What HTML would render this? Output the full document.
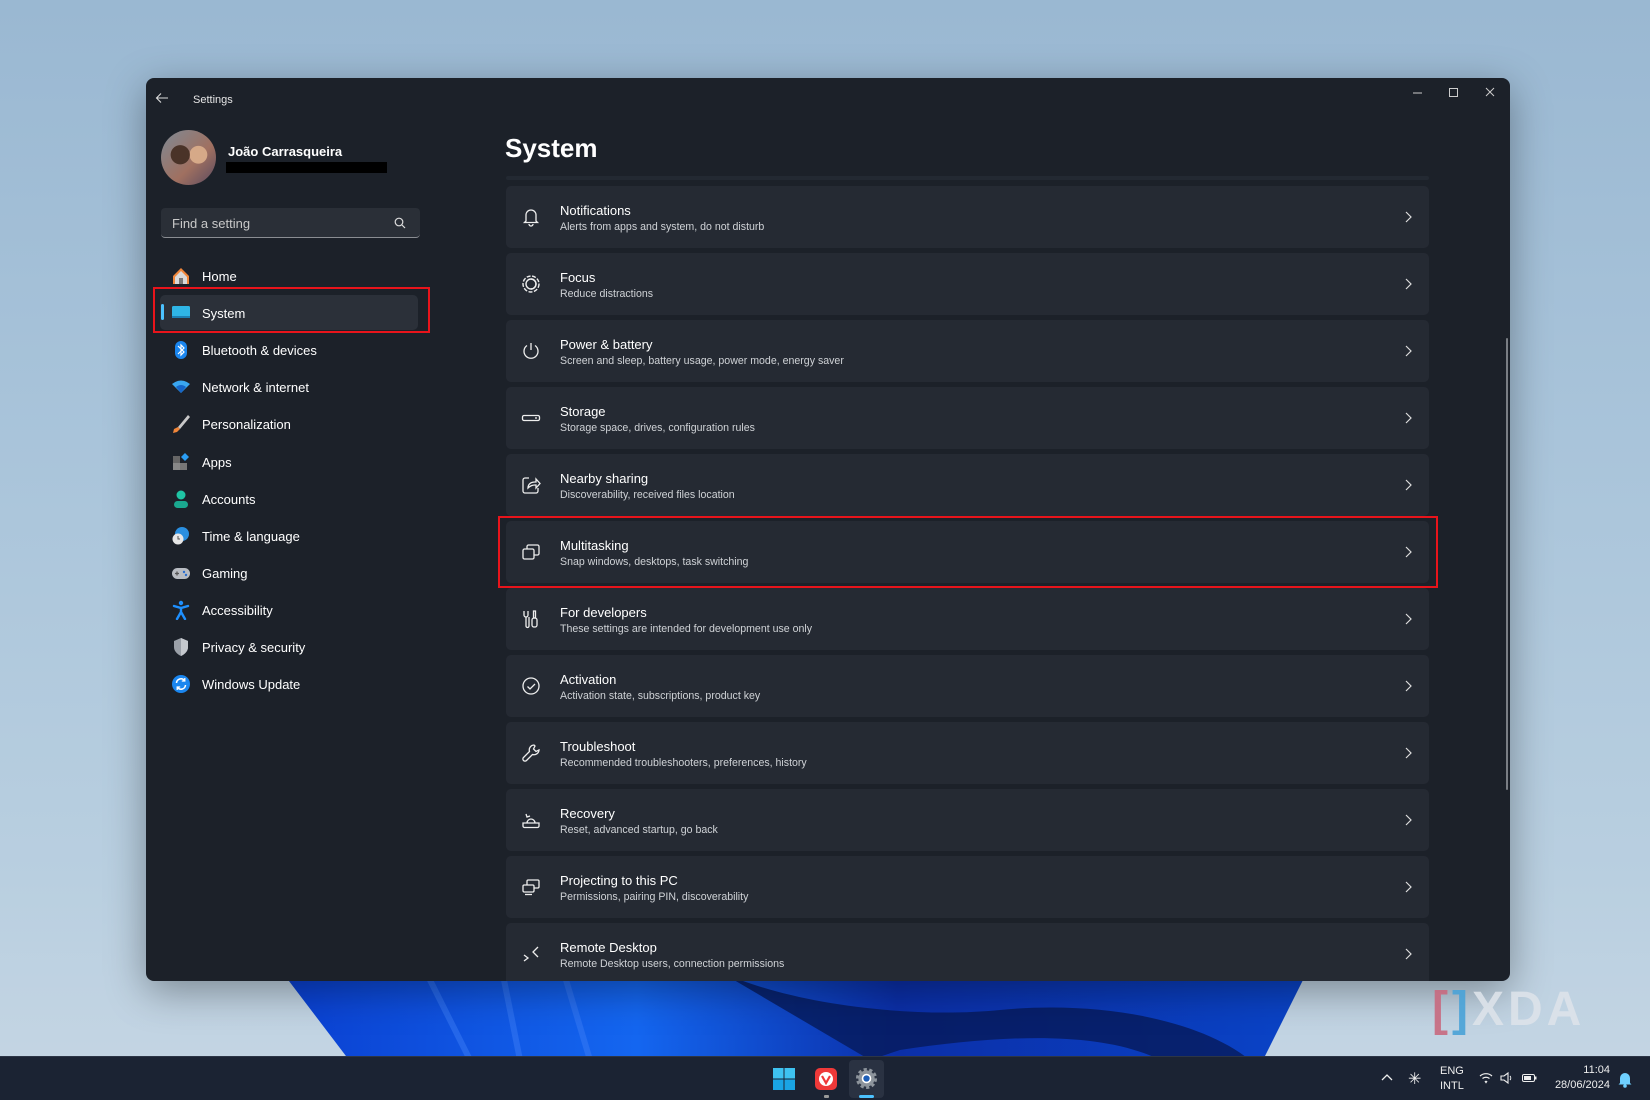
<!DOCTYPE html>
<html><head><meta charset="utf-8"><style>
*{margin:0;padding:0;box-sizing:border-box}
body{width:1650px;height:1100px;overflow:hidden;position:relative;font-family:"Segoe UI","Liberation Sans",sans-serif;background:linear-gradient(180deg,#9ab8d2 0%,#a9c4da 40%,#b9cfe0 80%,#c6d6e4 100%);color:#fff}
.wall{position:absolute;left:0;top:960px;width:1650px;height:100px}
.win{position:absolute;left:146px;top:78px;width:1364px;height:903px;background:#1c2129;border-radius:8px;overflow:hidden;box-shadow:0 10px 40px rgba(0,0,0,.35)}
.a{position:absolute}
.nav{position:absolute;left:56px;font-size:13px;color:#fff}
.ni{position:absolute;left:25px;width:20px;height:20px}
.card{position:absolute;left:360px;width:923px;height:62px;background:#252a33;border-radius:5px}
.card .t{position:absolute;left:54px;top:17px;font-size:13px;color:#fff}
.card .s{position:absolute;left:54px;top:35px;font-size:10.6px;color:#cfd2d6}
.card svg.ic{position:absolute;left:15px;top:21px}
.card svg.ch{position:absolute;right:16px;top:25px}
.tb{position:absolute;left:0;top:1056px;width:1650px;height:44px;background:#1b2333;border-top:1px solid #2c3546}
</style></head><body>
<svg class="wall" viewBox="0 0 1650 100" preserveAspectRatio="none">
<defs><linearGradient id="g1" x1="0" x2="1"><stop offset="0" stop-color="#0a3fd0"/><stop offset=".35" stop-color="#1466f0"/><stop offset=".6" stop-color="#0b2fa8"/><stop offset="1" stop-color="#0a44c8"/></linearGradient></defs>
<polygon points="273,0 1313,0 1263,100 349,100" fill="url(#g1)"/>
<path d="M700,0 C760,40 900,60 1000,50 C1100,40 1200,60 1250,100 L1160,100 C1100,70 1000,75 900,90 L870,100 Z" fill="#061a5a" opacity=".8"/>
<path d="M420,0 L470,100 M500,0 L520,100 M560,0 L590,100" stroke="#3b7cf5" stroke-width="6" opacity=".5"/>
</svg>
<div class="win">
<svg class="a" style="left:8px;top:12px" width="16" height="16" viewBox="0 0 16 16"><path d="M14 8H3M7 3.5L2.5 8 7 12.5" stroke="#ddd" stroke-width="1.1" fill="none"/></svg>
<div class="a" style="left:47px;top:16px;font-size:11px;color:#e6e6e6">Settings</div>
<svg class="a" style="left:1264px;top:5px" width="100" height="20"><path d="M3 10h9" stroke="#ccc"/><rect x="39.5" y="5.5" width="8" height="8" fill="none" stroke="#ccc"/><path d="M76 5l8 8M84 5l-8 8" stroke="#ccc"/></svg>
<div class="a" style="left:15px;top:52px;width:55px;height:55px;border-radius:50%;background:radial-gradient(circle at 35% 45%,#4a3328 0 20%,transparent 21%),radial-gradient(circle at 68% 45%,#d6a988 0 18%,transparent 19%),linear-gradient(135deg,#7e8a95,#a07060 60%,#5a4a60)"></div>
<div class="a" style="left:82px;top:66px;font-size:13px;font-weight:bold;color:#fff">João Carrasqueira</div>
<div class="a" style="left:80px;top:84px;width:161px;height:11px;background:#000"></div>
<div class="a" style="left:15px;top:130px;width:259px;height:30px;background:#2a2f37;border-radius:4px;border-bottom:1px solid #8a8d92"></div>
<div class="a" style="left:26px;top:138px;font-size:13px;color:#c9c9c9">Find a setting</div>
<svg class="a" style="left:248px;top:139px" width="12" height="12"><circle cx="5" cy="5" r="3.8" stroke="#ddd" fill="none" stroke-width="1.2"/><path d="M8 8l3 3" stroke="#ddd" stroke-width="1.2"/></svg>
<div class="a" style="left:14px;top:217px;width:258px;height:35px;background:#2b3039;border-radius:5px"></div>
<div class="a" style="left:15px;top:226px;width:3px;height:16px;background:#4cc2ff;border-radius:2px"></div>
<div class="a" style="left:7px;top:209px;width:277px;height:46px;border:2px solid #e8141b"></div>
<svg class="ni a" style="top:188px" viewBox="0 0 20 20"><path d="M2 10L10 2l8 8v8H2z" fill="#f0863a"/><path d="M4 11l6-6 6 6v7H4z" fill="#d9d9d9"/><rect x="8" y="12" width="4" height="6" fill="#777"/></svg>
<div class="nav" style="top:191px">Home</div>
<svg class="ni a" style="top:225px" viewBox="0 0 20 20"><rect x="1" y="3" width="18" height="12" rx="1.5" fill="#2fb5e6"/><rect x="1" y="13" width="18" height="2" fill="#1c7fb3"/></svg>
<div class="nav" style="top:228px">System</div>
<svg class="ni a" style="top:262px" viewBox="0 0 20 20"><rect x="4" y="1" width="12" height="18" rx="6" fill="#1a86ef"/><path d="M7 6l6 6-3 3V5l3 3-6 6" stroke="#fff" stroke-width="1.2" fill="none"/></svg>
<div class="nav" style="top:265px">Bluetooth &amp; devices</div>
<svg class="ni a" style="top:299px" viewBox="0 0 20 20"><path d="M1 7Q10 0 19 7L10 16z" fill="#3aa7f0"/><path d="M5 10Q10 6 15 10L10 16z" fill="#1565c8"/></svg>
<div class="nav" style="top:302px">Network &amp; internet</div>
<svg class="ni a" style="top:336px" viewBox="0 0 20 20"><path d="M17 1L7 13l2 2L19 3z" fill="#c8c8c8"/><path d="M7 13l-4 2-1 4 4-1 3-3z" fill="#f0863a"/></svg>
<div class="nav" style="top:339px">Personalization</div>
<svg class="ni a" style="top:374px" viewBox="0 0 20 20"><rect x="2" y="4" width="7" height="7" fill="#666"/><rect x="2" y="11" width="7" height="7" fill="#888"/><rect x="9" y="11" width="7" height="7" fill="#777"/><path d="M14 1l4 4-4 4-4-4z" fill="#2a9df4"/></svg>
<div class="nav" style="top:377px">Apps</div>
<svg class="ni a" style="top:411px" viewBox="0 0 20 20"><circle cx="10" cy="6" r="4.5" fill="#1fc4a4"/><rect x="3" y="12" width="14" height="7" rx="3.5" fill="#1aa88f"/></svg>
<div class="nav" style="top:414px">Accounts</div>
<svg class="ni a" style="top:448px" viewBox="0 0 20 20"><circle cx="11" cy="8" r="7" fill="#2a8fe0"/><circle cx="7" cy="13" r="5.5" fill="#e6e6e6"/><path d="M7 10v3h2" stroke="#555" fill="none"/></svg>
<div class="nav" style="top:451px">Time &amp; language</div>
<svg class="ni a" style="top:485px" viewBox="0 0 20 20"><rect x="1" y="5" width="18" height="11" rx="5.5" fill="#b8bcc2"/><path d="M4 10.5h4M6 8.5v4" stroke="#555" stroke-width="1.3"/><circle cx="13" cy="9" r="1.2" fill="#2a6fd0"/><circle cx="15" cy="12" r="1.2" fill="#2a6fd0"/></svg>
<div class="nav" style="top:488px">Gaming</div>
<svg class="ni a" style="top:522px" viewBox="0 0 20 20"><circle cx="10" cy="3" r="2.2" fill="#1e90ff"/><path d="M3 6l7 2 7-2M10 8v4l-4 7M10 12l4 7" stroke="#1e90ff" stroke-width="2.4" fill="none" stroke-linecap="round"/></svg>
<div class="nav" style="top:525px">Accessibility</div>
<svg class="ni a" style="top:559px" viewBox="0 0 20 20"><path d="M10 1L3 4v6c0 4 3 7 7 9 4-2 7-5 7-9V4z" fill="#9aa0a8"/><path d="M10 1v18c4-2 7-5 7-9V4z" fill="#c5c9ce"/></svg>
<div class="nav" style="top:562px">Privacy &amp; security</div>
<svg class="ni a" style="top:596px" viewBox="0 0 20 20"><circle cx="10" cy="10" r="9" fill="#1a86ef"/><path d="M5.5 9a4.5 4.5 0 0 1 8-2.5M14.5 11a4.5 4.5 0 0 1-8 2.5" stroke="#fff" stroke-width="1.5" fill="none"/><path d="M13.8 4v3h-3M6.2 16v-3h3" stroke="#fff" stroke-width="1.3" fill="none"/></svg>
<div class="nav" style="top:599px">Windows Update</div>
<div class="a" style="left:359px;top:55px;font-size:26px;font-weight:600;color:#fff">System</div>
<div class="a" style="left:360px;top:98px;width:923px;height:4px;background:#252a33;border-radius:2px;opacity:.9"></div>
<div class="a" style="left:1360px;top:260px;width:2px;height:452px;background:#7a7e84;border-radius:1px"></div>
<div class="card" style="top:108px"><svg class="ic" width="20" height="20" viewBox="0 0 20 20" fill="none" stroke="#eee" stroke-width="1.3"><path d="M5 14V8a5 5 0 0 1 10 0v6l1.5 1.5h-13z"/><path d="M8 17a2 2 0 0 0 4 0"/></svg><div class="t">Notifications</div><div class="s">Alerts from apps and system, do not disturb</div><svg class="ch" width="10" height="12"><path d="M3 1l5 5-5 5" stroke="#ddd" fill="none" stroke-width="1.2"/></svg></div>
<div class="card" style="top:175px"><svg class="ic" width="20" height="20" viewBox="0 0 20 20" fill="none" stroke="#eee" stroke-width="1.4"><circle cx="10" cy="10" r="8" stroke-dasharray="4 1.5"/><circle cx="10" cy="10" r="5"/><path d="M10 5a5 5 0 0 1 0 10 3 3 0 0 0 0-10z" fill="#eee"/></svg><div class="t">Focus</div><div class="s">Reduce distractions</div><svg class="ch" width="10" height="12"><path d="M3 1l5 5-5 5" stroke="#ddd" fill="none" stroke-width="1.2"/></svg></div>
<div class="card" style="top:242px"><svg class="ic" width="20" height="20" viewBox="0 0 20 20" fill="none" stroke="#eee" stroke-width="1.3"><path d="M10 2v7"/><path d="M6 4.5a7 7 0 1 0 8 0"/></svg><div class="t">Power &amp; battery</div><div class="s">Screen and sleep, battery usage, power mode, energy saver</div><svg class="ch" width="10" height="12"><path d="M3 1l5 5-5 5" stroke="#ddd" fill="none" stroke-width="1.2"/></svg></div>
<div class="card" style="top:309px"><svg class="ic" width="20" height="20" viewBox="0 0 20 20" fill="none" stroke="#eee" stroke-width="1.3"><rect x="1.5" y="7.5" width="17" height="5" rx="1.5"/><path d="M14 10h2"/></svg><div class="t">Storage</div><div class="s">Storage space, drives, configuration rules</div><svg class="ch" width="10" height="12"><path d="M3 1l5 5-5 5" stroke="#ddd" fill="none" stroke-width="1.2"/></svg></div>
<div class="card" style="top:376px"><svg class="ic" width="20" height="20" viewBox="0 0 20 20" fill="none" stroke="#eee" stroke-width="1.3"><path d="M8 3H4a2 2 0 0 0-2 2v11a2 2 0 0 0 2 2h11a2 2 0 0 0 2-2v-3"/><path d="M7 13c0-4 3-6 7-6h1V4l4 4.5-4 4.5v-3h-1c-3 0-5 1-7 3z"/></svg><div class="t">Nearby sharing</div><div class="s">Discoverability, received files location</div><svg class="ch" width="10" height="12"><path d="M3 1l5 5-5 5" stroke="#ddd" fill="none" stroke-width="1.2"/></svg></div>
<div class="card" style="top:443px"><svg class="ic" width="20" height="20" viewBox="0 0 20 20" fill="none" stroke="#eee" stroke-width="1.3"><rect x="2" y="7" width="11" height="10" rx="1.5"/><path d="M6 7V4.5A1.5 1.5 0 0 1 7.5 3h9A1.5 1.5 0 0 1 18 4.5v7a1.5 1.5 0 0 1-1.5 1.5H13"/></svg><div class="t">Multitasking</div><div class="s">Snap windows, desktops, task switching</div><svg class="ch" width="10" height="12"><path d="M3 1l5 5-5 5" stroke="#ddd" fill="none" stroke-width="1.2"/></svg></div>
<div class="card" style="top:510px"><svg class="ic" width="20" height="20" viewBox="0 0 20 20" fill="none" stroke="#eee" stroke-width="1.3"><path d="M3 2v4a2 2 0 0 0 4 0V2M5 8v9a1.5 1.5 0 0 0 3 0V8"/><rect x="11" y="9" width="5" height="9" rx="2"/><path d="M12.5 2h2v7h-2z"/></svg><div class="t">For developers</div><div class="s">These settings are intended for development use only</div><svg class="ch" width="10" height="12"><path d="M3 1l5 5-5 5" stroke="#ddd" fill="none" stroke-width="1.2"/></svg></div>
<div class="card" style="top:577px"><svg class="ic" width="20" height="20" viewBox="0 0 20 20" fill="none" stroke="#eee" stroke-width="1.3"><circle cx="10" cy="10" r="8"/><path d="M6.5 10.5l2.5 2.5 5-5"/></svg><div class="t">Activation</div><div class="s">Activation state, subscriptions, product key</div><svg class="ch" width="10" height="12"><path d="M3 1l5 5-5 5" stroke="#ddd" fill="none" stroke-width="1.2"/></svg></div>
<div class="card" style="top:644px"><svg class="ic" width="20" height="20" viewBox="0 0 20 20" fill="none" stroke="#eee" stroke-width="1.3"><path d="M13 2a5 5 0 0 0-4.5 6.5L2.5 14.5a2 2 0 0 0 3 3l6-6A5 5 0 0 0 18 7l-3 1.5-2.5-2.5L14 3z"/></svg><div class="t">Troubleshoot</div><div class="s">Recommended troubleshooters, preferences, history</div><svg class="ch" width="10" height="12"><path d="M3 1l5 5-5 5" stroke="#ddd" fill="none" stroke-width="1.2"/></svg></div>
<div class="card" style="top:711px"><svg class="ic" width="20" height="20" viewBox="0 0 20 20" fill="none" stroke="#eee" stroke-width="1.3"><path d="M2 13h16v3a1.5 1.5 0 0 1-1.5 1.5h-13A1.5 1.5 0 0 1 2 16zM6 13a4 4 0 1 1 8 0"/><path d="M5 4l1 3 3-1"/></svg><div class="t">Recovery</div><div class="s">Reset, advanced startup, go back</div><svg class="ch" width="10" height="12"><path d="M3 1l5 5-5 5" stroke="#ddd" fill="none" stroke-width="1.2"/></svg></div>
<div class="card" style="top:778px"><svg class="ic" width="20" height="20" viewBox="0 0 20 20" fill="none" stroke="#eee" stroke-width="1.3"><rect x="6" y="3" width="12" height="8" rx="1.2"/><rect x="2" y="8" width="11" height="7" rx="1.2" fill="#252a33"/><path d="M4 17.5h7"/></svg><div class="t">Projecting to this PC</div><div class="s">Permissions, pairing PIN, discoverability</div><svg class="ch" width="10" height="12"><path d="M3 1l5 5-5 5" stroke="#ddd" fill="none" stroke-width="1.2"/></svg></div>
<div class="card" style="top:845px"><svg class="ic" width="20" height="20" viewBox="0 0 20 20" fill="none" stroke="#eee" stroke-width="1.3"><path d="M3 11l4 3-4 3M17 3l-5 5 5 5"/></svg><div class="t">Remote Desktop</div><div class="s">Remote Desktop users, connection permissions</div><svg class="ch" width="10" height="12"><path d="M3 1l5 5-5 5" stroke="#ddd" fill="none" stroke-width="1.2"/></svg></div>
</div>
<div class="a" style="left:498px;top:516px;width:940px;height:72px;border:2px solid #e8141b"></div>
<div class="a" style="left:1432px;top:982px;font-family:'Liberation Sans',sans-serif;font-weight:bold;font-size:48px;letter-spacing:4px;color:#dde3ea;opacity:.9"><span style="color:#c86a80">[</span><span style="color:#4aa3d8">]</span>XDA</div>
<div class="tb">
<svg class="a" style="left:773px;top:11px" width="22" height="22"><rect x="0" y="0" width="10.5" height="10.5" fill="#3ec2f0"/><rect x="11.5" y="0" width="10.5" height="10.5" fill="#3ec2f0"/><rect x="0" y="11.5" width="10.5" height="10.5" fill="#1aa4e4"/><rect x="11.5" y="11.5" width="10.5" height="10.5" fill="#1aa4e4"/></svg>
<svg class="a" style="left:815px;top:11px" width="22" height="22"><rect width="22" height="22" rx="5" fill="#ef3939"/><circle cx="11" cy="11" r="7" fill="#fff"/><path d="M7 8l4 7 4-7" stroke="#ef3939" stroke-width="2.2" fill="none"/></svg>
<div class="a" style="left:824px;top:38px;width:5px;height:3px;background:#999;border-radius:1px"></div>
<div class="a" style="left:849px;top:3px;width:35px;height:38px;background:#2a3242;border-radius:4px"></div>
<svg class="a" style="left:855px;top:10px" width="23" height="23" viewBox="0 0 24 24"><circle cx="12" cy="12" r="8.5" fill="#8d949c" stroke="#8d949c" stroke-width="5" stroke-dasharray="3 2.3"/><circle cx="12" cy="12" r="5" fill="#fff"/><circle cx="12" cy="12" r="3.3" fill="#1e5fb8"/></svg>
<div class="a" style="left:859px;top:38px;width:15px;height:3px;background:#4cc2ff;border-radius:2px"></div>
<svg class="a" style="left:1380px;top:15px" width="14" height="10"><path d="M2 8l5-5 5 5" stroke="#eee" fill="none" stroke-width="1.3"/></svg>
<div class="a" style="left:1408px;top:12px;font-size:16px;color:#eee">✳</div>
<div class="a" style="left:1440px;top:7px;font-size:11px;line-height:15px;color:#eee;text-align:center">ENG<br>INTL</div>
<svg class="a" style="left:1478px;top:12px" width="70" height="18"><path d="M2 7a9 9 0 0 1 12 0M4.5 9.5a5.5 5.5 0 0 1 7 0M7 12l1 1.5 1-1.5" stroke="#eee" fill="none" stroke-width="1.2"/><path d="M23 7h3l4-3v10l-4-3h-3z" stroke="#eee" fill="none" stroke-width="1.1"/><path d="M32 7a3 3 0 0 1 0 4" stroke="#eee" fill="none"/><rect x="44.5" y="5.5" width="12" height="7" rx="1.5" stroke="#eee" fill="none"/><rect x="46" y="7" width="7" height="4" fill="#eee"/><rect x="57" y="7.5" width="1.5" height="3" fill="#eee"/></svg>
<div class="a" style="left:1552px;top:6px;font-size:11px;line-height:15px;color:#eee;text-align:right;width:58px">11:04<br>28/06/2024</div>
<svg class="a" style="left:1617px;top:13px" width="16" height="18"><path d="M3 13V8a5 5 0 0 1 10 0v5l1.5 1.5h-13z" fill="#6fd0ff"/><circle cx="8" cy="16" r="1.8" fill="#6fd0ff"/></svg>
</div>
</body></html>
